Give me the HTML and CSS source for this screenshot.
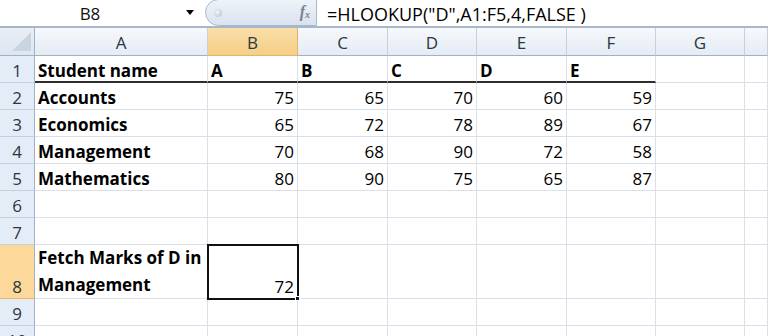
FILE: index.html
```html
<!DOCTYPE html>
<html>
<head>
<meta charset="utf-8">
<link rel="stylesheet" href="styles.css">
</head>
<body>
<div class="app">
  <div class="fbar">
    <div class="namebox"><span class="name">B8</span><span class="caret"></span></div>
    <div class="pill"><span class="knob"></span><span class="fx">f<sub>x</sub></span></div>
    <div class="formula">=HLOOKUP("D",A1:F5,4,FALSE )</div>
  </div>
  <div class="sheet">
    <div class="corner"><span class="tri"></span></div>
    <div class="ch">A</div><div class="ch sel">B</div><div class="ch">C</div><div class="ch">D</div><div class="ch">E</div><div class="ch">F</div><div class="ch">G</div><div class="ch"></div>

    <div class="rh">1</div>
    <div class="c b hd">Student name</div><div class="c b hd">A</div><div class="c b hd">B</div><div class="c b hd">C</div><div class="c b hd">D</div><div class="c b hd">E</div><div class="c"></div><div class="c"></div>

    <div class="rh">2</div>
    <div class="c b">Accounts</div><div class="c n">75</div><div class="c n">65</div><div class="c n">70</div><div class="c n">60</div><div class="c n">59</div><div class="c"></div><div class="c"></div>

    <div class="rh">3</div>
    <div class="c b">Economics</div><div class="c n">65</div><div class="c n">72</div><div class="c n">78</div><div class="c n">89</div><div class="c n">67</div><div class="c"></div><div class="c"></div>

    <div class="rh">4</div>
    <div class="c b">Management</div><div class="c n">70</div><div class="c n">68</div><div class="c n">90</div><div class="c n">72</div><div class="c n">58</div><div class="c"></div><div class="c"></div>

    <div class="rh">5</div>
    <div class="c b">Mathematics</div><div class="c n">80</div><div class="c n">90</div><div class="c n">75</div><div class="c n">65</div><div class="c n">87</div><div class="c"></div><div class="c"></div>

    <div class="rh">6</div>
    <div class="c"></div><div class="c"></div><div class="c"></div><div class="c"></div><div class="c"></div><div class="c"></div><div class="c"></div><div class="c"></div>

    <div class="rh">7</div>
    <div class="c"></div><div class="c"></div><div class="c"></div><div class="c"></div><div class="c"></div><div class="c"></div><div class="c"></div><div class="c"></div>

    <div class="rh sel">8</div>
    <div class="c b wrap">Fetch Marks of D in Management</div><div class="c n active">72<span class="handle"></span></div><div class="c"></div><div class="c"></div><div class="c"></div><div class="c"></div><div class="c"></div><div class="c"></div>

    <div class="rh">9</div>
    <div class="c"></div><div class="c"></div><div class="c"></div><div class="c"></div><div class="c"></div><div class="c"></div><div class="c"></div><div class="c"></div>

    <div class="rh">10</div>
    <div class="c"></div><div class="c"></div><div class="c"></div><div class="c"></div><div class="c"></div><div class="c"></div><div class="c"></div><div class="c"></div>
  </div>
</div>
</body>
</html>
```

FILE: styles.css
```css
* { box-sizing: border-box; }
html, body { margin: 0; padding: 0; background: #fff; }
body { width: 768px; height: 336px; overflow: hidden; font-family: "Open Sans", Lato, "Liberation Sans", sans-serif; font-size: 17px; color: #000; }

.app { display: flex; flex-direction: column; height: 336px; }

.fbar {
  display: flex;
  height: 29px;
  border-bottom: 2px solid #a7b6c8;
  background: #fff;
}
.namebox {
  width: 205px;
  display: flex;
  align-items: center;
}
.name { width: 180px; text-align: center; padding-top: 1px; color: #111; }
.caret {
  width: 0; height: 0;
  border-left: 4px solid transparent;
  border-right: 4px solid transparent;
  border-top: 5px solid #000;
  margin-left: 6px;
  margin-top: -2px;
}
.pill {
  width: 112px;
  height: 27px;
  margin-top: -1px;
  border: 1px solid #a9b8cb;
  border-top-left-radius: 14px;
  border-bottom-left-radius: 14px;
  background: linear-gradient(#eef3fa, #d9e3ef);
  display: flex;
  align-items: center;
  justify-content: space-between;
  padding: 0 6px 0 8px;
}
.knob {
  width: 8px; height: 8px; border-radius: 50%;
  background: radial-gradient(circle at 40% 40%, #f4f6f9, #b3bcc8);
}
.fx {
  font-family: "Liberation Serif", serif;
  font-style: italic;
  font-weight: bold;
  font-size: 16px;
  color: #7a828c;
  margin-top: -2px;
}
.fx sub { font-size: 10px; vertical-align: -1px; }
.formula {
  flex: 1;
  padding-left: 10px;
  display: flex;
  align-items: center;
  padding-top: 1px;
  font-size: 18px;
  color: #000;
  white-space: nowrap;
}

.sheet {
  display: grid;
  grid-template-columns: 35px 173px 90px 90px 89px 90px 89px 89px 1fr;
  grid-template-rows: 28px repeat(7, 27px) 54px 27px 27px;
}

.corner {
  background: linear-gradient(#e9eef5, #dde6f1);
  border-right: 1px solid #9fb1c6;
  border-bottom: 1px solid #9fb1c6;
  position: relative;
}
.tri {
  position: absolute;
  right: 3px; bottom: 4px;
  width: 0; height: 0;
  border-left: 19px solid transparent;
  border-bottom: 19px solid #c9d4e1;
}
.ch {
  background: linear-gradient(#f6f9fc, #e4ebf4);
  border-right: 1px solid #c4d0de;
  border-bottom: 1px solid #9fb1c6;
  display: flex;
  align-items: center;
  justify-content: center;
  color: #2b3640;
  padding-top: 2px;
}
.ch.sel {
  background: linear-gradient(#f9dea9, #f6cf86);
  border-right-color: #e2b46a;
  border-bottom-color: #e2b46a;
}
.rh {
  background: #e4ecf7;
  border-right: 1px solid #9fb1c6;
  border-bottom: 1px solid #c4d0de;
  display: flex;
  align-items: flex-end;
  justify-content: center;
  color: #2b3640;
  line-height: 22px;
}
.rh.sel {
  background: #fcd89b;
  border-bottom-color: #e8b86c;
}

.c {
  border-right: 1px solid #dadfe8;
  border-bottom: 1px solid #dadfe8;
  display: flex;
  align-items: flex-end;
  padding: 0 3px;
  line-height: 22px;
  white-space: nowrap;
}
.c.b { font-weight: bold; }
.c.hd { border-bottom: 2px solid #2e2e2e; line-height: 21px; }
.c.n { justify-content: flex-end; }
.c.wrap { white-space: normal; line-height: 27px; }
.c.active {
  position: relative;
  outline: 2px solid #111;
  outline-offset: -1px;
}
.handle {
  position: absolute;
  right: -3px; bottom: -3px;
  width: 5px; height: 5px;
  background: #111;
  border: 1px solid #fff;
}
```
